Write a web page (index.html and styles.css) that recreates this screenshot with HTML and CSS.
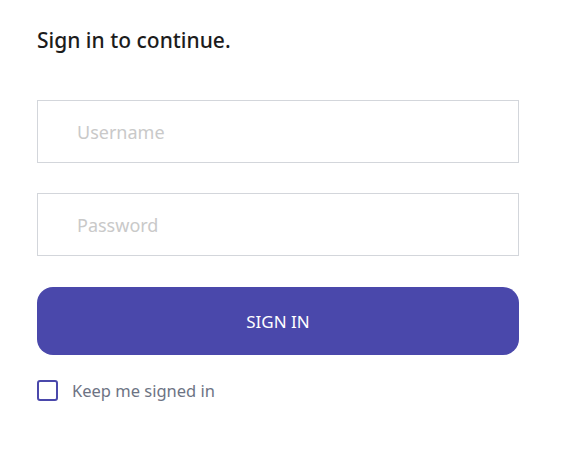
FILE: index.html
```html
<!DOCTYPE html>
<html lang="en">
<head>
<meta charset="utf-8">
<title>Sign in</title>
<link rel="stylesheet" href="styles.css">
</head>
<body>
<main class="login">
  <h1 class="title">Sign in to continue.</h1>
  <form class="form">
    <input class="field" type="text" placeholder="Username">
    <input class="field" type="password" placeholder="Password">
    <button class="btn" type="button">SIGN IN</button>
    <label class="remember">
      <span class="box"></span>
      <span class="remember-text">Keep me signed in</span>
    </label>
  </form>
</main>
</body>
</html>
```
FILE: styles.css
```css
html, body {
  margin: 0;
  padding: 0;
  background: #ffffff;
}
body {
  font-family: "Noto Sans", "Open Sans", sans-serif;
}
.login {
  width: 482px;
  padding: 26px 0 0 37px;
}
.title {
  margin: 0;
  font-size: 21px;
  line-height: 28px;
  font-weight: 500;
  color: #1c1c1c;
}
.form {
  display: flex;
  flex-direction: column;
  margin-top: 46px;
}
.field {
  box-sizing: border-box;
  height: 63px;
  width: 482px;
  margin: 0 0 30px 0;
  padding: 0 0 0 39px;
  border: 1px solid #d3d6db;
  border-radius: 0;
  font-family: inherit;
  font-size: 18px;
  color: #333;
  outline: none;
  background: #fff;
}
.field::placeholder {
  color: #c9c9c9;
}
.btn {
  height: 68px;
  width: 482px;
  margin: 1px 0 24px 0;
  padding: 0;
  border: none;
  border-radius: 16px;
  background: #4a48ab;
  color: #ffffff;
  font-family: inherit;
  font-size: 17px;
  letter-spacing: 0;
  cursor: pointer;
}
.remember {
  display: flex;
  align-items: center;
  gap: 14px;
}
.box {
  box-sizing: border-box;
  width: 21px;
  height: 21px;
  border: 2px solid #4a48ab;
  border-radius: 3px;
}
.remember-text {
  font-size: 16.5px;
  color: #6d7384;
}
```
